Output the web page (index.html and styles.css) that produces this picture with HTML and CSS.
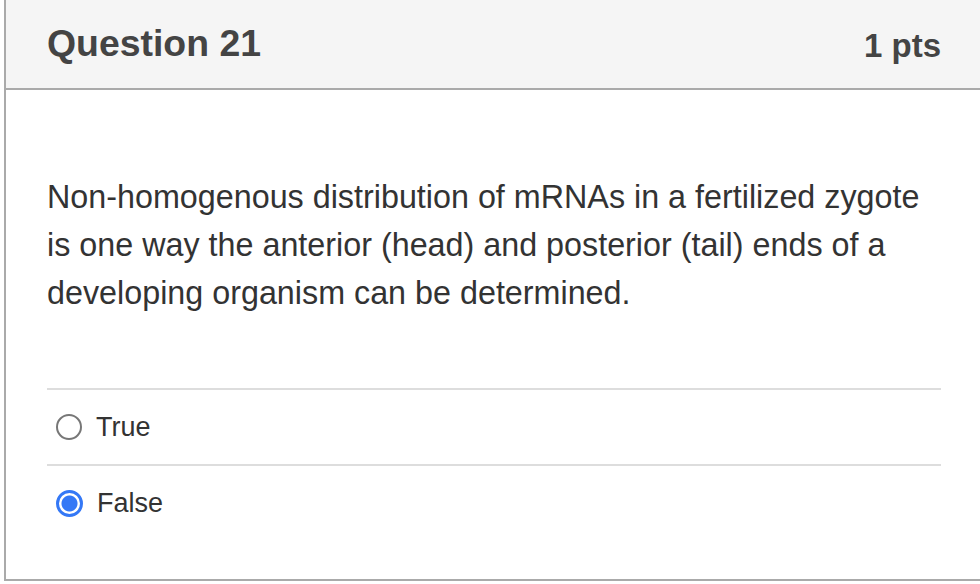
FILE: index.html
```html
<!DOCTYPE html>
<html>
<head>
<meta charset="utf-8">
<link rel="stylesheet" href="styles.css">
</head>
<body>
<div class="card">
  <div class="header">
    <div class="title">Question 21</div>
    <div class="pts">1 pts</div>
  </div>
  <div class="content">
    <p class="question">Non-homogenous distribution of mRNAs in a fertilized zygote is one way the anterior (head) and posterior (tail) ends of a developing organism can be determined.</p>
    <div class="answers">
      <div class="answer">
        <span class="radio"></span>
        <span class="label">True</span>
      </div>
      <div class="answer">
        <span class="radio checked"></span>
        <span class="label">False</span>
      </div>
    </div>
  </div>
</div>
</body>
</html>
```

FILE: styles.css
```css
html, body {
  margin: 0;
  padding: 0;
  overflow: hidden;
  background: #fff;
}
body {
  font-family: "Liberation Sans", Arial, Helvetica, sans-serif;
  color: #2d2d2d;
  width: 980px;
  height: 584px;
}
.card {
  margin-left: 4px;
  width: 980px;
  height: 581px;
  box-sizing: border-box;
  border-left: 2px solid #aaaaaa;
  border-right: 2px solid #aaaaaa;
  border-bottom: 2px solid #aaaaaa;
  display: flex;
  flex-direction: column;
}
.header {
  height: 88px;
  background: #f5f5f5;
  border-bottom: 2px solid #aaaaaa;
  display: flex;
  justify-content: space-between;
  align-items: center;
  padding: 0 41px;
  color: #444;
  font-weight: bold;
}
.title {
  font-size: 37.4px;
  margin-top: -1px;
}
.pts {
  font-size: 33px;
  margin-top: 3px;
}
.content {
  padding: 0 41px;
}
.question {
  margin: 0;
  padding-top: 83px;
  font-size: 32.3px;
  line-height: 48px;
  color: #333;
  padding-bottom: 71px;
}
.answers {
  display: flex;
  flex-direction: column;
}
.answer {
  border-top: 2px solid #dddddd;
  height: 74px;
  display: flex;
  align-items: center;
  padding-left: 9px;
  gap: 14px;
}
.radio {
  width: 22px;
  height: 22px;
  border: 2px solid #777;
  border-radius: 50%;
  box-sizing: content-box;
  flex: none;
}
.radio.checked {
  border: 3px solid #3478f6;
  width: 21px;
  height: 21px;
  background: radial-gradient(circle, #3478f6 0 7.5px, #fff 8.5px);
}
.label {
  font-size: 27px;
  color: #333;
}
```
